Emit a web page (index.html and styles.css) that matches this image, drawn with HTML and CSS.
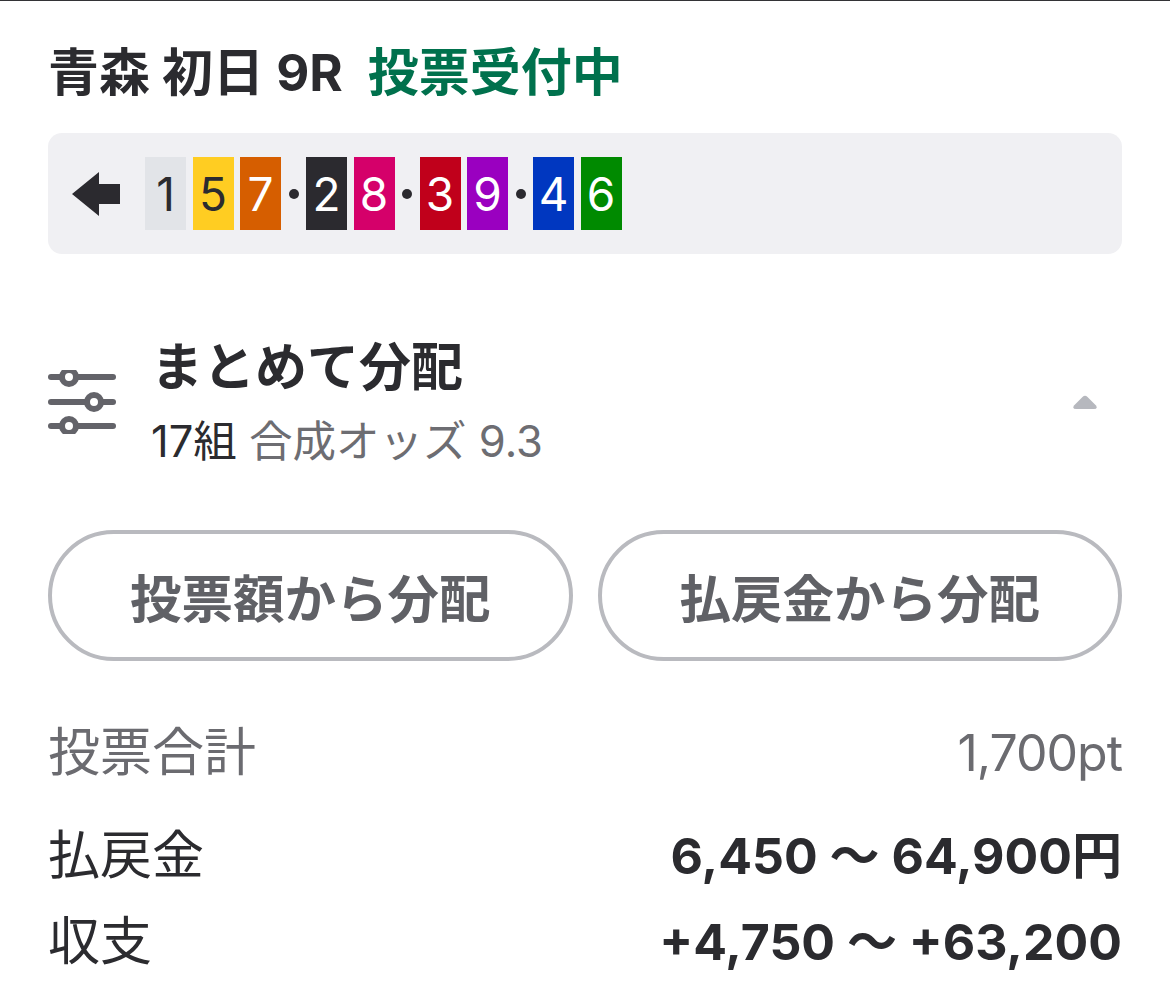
FILE: index.html
```html
<!DOCTYPE html>
<html lang="ja">
<head>
<meta charset="utf-8">
<link rel="stylesheet" href="styles.css">
</head>
<body>
<div class="page">
  <h1 class="title"><span class="race">青森 初日 9R</span><span class="status">投票受付中</span></h1>

  <div class="combo">
    <svg class="arrow" viewBox="0 0 48 44" width="48" height="44"><polygon points="0,22 27,0 27,12 48,12 48,32 27,32 27,44" fill="#2b2a2f"/></svg>
    <div class="group">
      <span class="chip c1">1</span><span class="chip c5">5</span><span class="chip c7">7</span>
    </div>
    <span class="sep"><i></i></span>
    <div class="group">
      <span class="chip c2">2</span><span class="chip c8">8</span>
    </div>
    <span class="sep"><i></i></span>
    <div class="group">
      <span class="chip c3">3</span><span class="chip c9">9</span>
    </div>
    <span class="sep"><i></i></span>
    <div class="group">
      <span class="chip c4">4</span><span class="chip c6">6</span>
    </div>
  </div>

  <div class="section">
    <svg class="sliders" viewBox="0 0 68 64" width="68" height="64">
      <g stroke="#636369" stroke-width="6" stroke-linecap="round" fill="#fff">
        <line x1="3" y1="7" x2="65" y2="7"/>
        <line x1="3" y1="32" x2="65" y2="32"/>
        <line x1="3" y1="56" x2="65" y2="56"/>
        <circle cx="21" cy="7" r="7"/>
        <circle cx="46" cy="32" r="7"/>
        <circle cx="21" cy="56" r="7"/>
      </g>
    </svg>
    <div class="section-text">
      <div class="section-title">まとめて分配</div>
      <div class="section-sub"><span class="count">17組</span> 合成オッズ 9.3</div>
    </div>
    <svg class="caret" viewBox="0 0 26 15" width="26" height="15"><path d="M10.5 2 Q13 -0.5 15.5 2 L24 10.5 Q26 14 22 14 L4 14 Q0 14 2 10.5 Z" fill="#b6b8be"/></svg>
  </div>

  <div class="buttons">
    <div class="btn">投票額から分配</div>
    <div class="btn">払戻金から分配</div>
  </div>

  <div class="row row-total">
    <span class="label muted">投票合計</span>
    <span class="value muted thin">1,700pt</span>
  </div>
  <div class="row row-pay">
    <span class="label">払戻金</span>
    <span class="value strong">6,450 〜 64,900円</span>
  </div>
  <div class="row row-bal">
    <span class="label">収支</span>
    <span class="value strong">+4,750 〜 +63,200</span>
  </div>
</div>
</body>
</html>
```

FILE: styles.css
```css
html, body {
  margin: 0;
  padding: 0;
  background: #ffffff;
}
body {
  border-top: 1px solid #333336;
  font-family: "Inter", "Noto Sans CJK JP", sans-serif;
  color: #2b2b2f;
}
.page {
  padding: 42px 48px 0 48px;
}
.title {
  margin: 0;
  font-size: 51px;
  line-height: 60px;
  font-weight: 700;
  display: flex;
  gap: 25px;
}
.race { color: #2b2b2f; }
.status { color: #00714d; }

.combo {
  margin-top: 30px;
  height: 121px;
  background: #f0f0f3;
  border-radius: 14px;
  display: flex;
  align-items: center;
  padding-left: 24px;
  box-sizing: border-box;
}
.arrow {
  display: block;
  margin-right: 25px;
}
.group {
  display: flex;
  gap: 6.5px;
}
.chip {
  width: 41px;
  height: 73px;
  display: flex;
  align-items: center;
  justify-content: center;
  font-size: 46px;
  font-weight: 400;
  color: #ffffff;
  font-family: "Inter", sans-serif;
}
.sep {
  width: 25px;
  display: flex;
  justify-content: center;
}
.sep i {
  width: 10px;
  height: 10px;
  border-radius: 50%;
  background: #2b2a2f;
}
.c1 { background: #e2e4e8; color: #2b2b2f; }
.c5 { background: #ffcd22; color: #2b2b2f; }
.c7 { background: #d65e00; }
.c2 { background: #2b2a2f; }
.c8 { background: #d5006a; }
.c3 { background: #c0001b; }
.c9 { background: #9a00c0; }
.c4 { background: #0037c0; }
.c6 { background: #008a00; }

.section {
  margin-top: 84px;
  display: flex;
  align-items: center;
}
.sliders {
  display: block;
  margin-right: 35px;
}
.section-text {
  flex: 1;
  display: flex;
  flex-direction: column;
  gap: 18px;
}
.section-title {
  font-size: 52px;
  line-height: 60px;
  font-weight: 700;
  color: #2b2b2f;
}
.section-sub {
  font-size: 43.5px;
  line-height: 50px;
  color: #6d6d72;
}
.section-sub .count { color: #2b2b2f; }
.caret {
  display: block;
  margin-right: 24px;
}

.buttons {
  margin-top: 64px;
  display: flex;
  gap: 25px;
}
.btn {
  flex: 1;
  height: 131px;
  box-sizing: border-box;
  border: 4px solid #b9babf;
  border-radius: 66px;
  display: flex;
  align-items: center;
  justify-content: center;
  font-size: 51.5px;
  font-weight: 700;
  color: #606166;
}

.row {
  display: flex;
  justify-content: space-between;
  align-items: center;
  line-height: 60px;
}
.row-total { margin-top: 62px; }
.row-pay { margin-top: 43px; }
.row-bal { margin-top: 26px; }
.label { font-size: 52px; font-weight: 400; }
.value { font-size: 50px; }
.muted { color: #6b6b70; }
.thin { letter-spacing: -1px; }
.strong { font-weight: 700; color: #2b2b2f; }
```
